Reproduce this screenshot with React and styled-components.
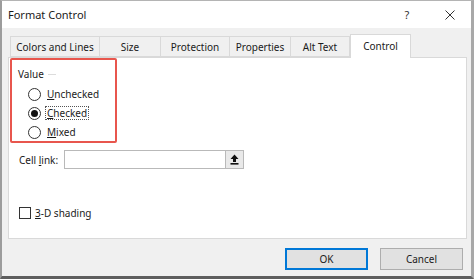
import React from "react";
import styled, { createGlobalStyle } from "styled-components";

const GlobalStyle = createGlobalStyle`
  html, body {
    margin: 0;
    padding: 0;
    background: #f0f0f0;
  }
  body {
    font-family: "Noto Sans", "Open Sans", sans-serif;
    color: #1b1b1b;
  }
`;

const Window = styled.div`
  width: 474px;
  height: 279px;
  box-sizing: border-box;
  background: #f0f0f0;
  border-left: 2px solid #9c9c9c;
  border-top: 1px solid #b4b4b4;
  border-right: 3px solid #a8a8a8;
  border-bottom: 3px solid #5e5e5e;
  display: flex;
  flex-direction: column;
  overflow: hidden;
`;

const TitleBar = styled.div`
  height: 27px;
  flex-shrink: 0;
  background: #ffffff;
  display: flex;
  align-items: center;
  padding: 0 0 0 6px;
  font-size: 11px;
`;

const Title = styled.span`
  flex: 1;
`;

const TitleButton = styled.span`
  width: ${(p) => p.w}px;
  display: flex;
  align-items: center;
  justify-content: center;
  font-size: 11px;
  color: #333;
`;

const Body = styled.div`
  flex: 1;
  display: flex;
  flex-direction: column;
  padding: 6px 4px 0 6px;
`;

const TabStrip = styled.div`
  display: flex;
  align-items: flex-end;
  height: 23px;
  padding-left: 2px;
  position: relative;
  z-index: 1;
`;

const Tab = styled.div`
  width: ${(p) => p.w}px;
  box-sizing: border-box;
  height: ${(p) => (p.active ? 24 : 21)}px;
  margin-bottom: ${(p) => (p.active ? -1 : 0)}px;
  display: flex;
  align-items: center;
  justify-content: center;
  font-size: 10px;
  background: ${(p) => (p.active ? "#ffffff" : "#f0f0f0")};
  border: 1px solid #d9d9d9;
  border-bottom: ${(p) => (p.active ? "none" : "1px solid #d9d9d9")};
  border-left: ${(p) => (p.first || p.active ? "1px solid #d9d9d9" : "none")};
  padding-bottom: ${(p) => (p.active ? 2 : 0)}px;
`;

const Panel = styled.div`
  height: 182px;
  box-sizing: border-box;
  background: #ffffff;
  border: 1px solid #d9d9d9;
  padding: 0 0 0 1px;
  display: flex;
  flex-direction: column;
  font-size: 10px;
`;

const Highlight = styled.div`
  width: 107px;
  height: 85px;
  box-sizing: border-box;
  border: 2.5px solid #e8564d;
  border-radius: 2px;
  padding: 7px 0 0 6px;
`;

const GroupLabel = styled.div`
  display: flex;
  align-items: center;
  gap: 4px;
  height: 14px;
  &::after {
    content: "";
    width: 8px;
    height: 1px;
    background: #dcdcdc;
  }
`;

const RadioList = styled.div`
  display: flex;
  flex-direction: column;
  gap: 5px;
  margin: 6px 0 0 10px;
`;

const RadioRow = styled.label`
  display: flex;
  align-items: center;
  gap: 4px;
  height: 14px;
`;

const RadioCircle = styled.span`
  width: 11px;
  height: 11px;
  border: 1px solid #333;
  border-radius: 50%;
  display: flex;
  align-items: center;
  justify-content: center;
  &::after {
    content: "";
    width: 7px;
    height: 7px;
    border-radius: 50%;
    background: ${(p) => (p.checked ? "#111" : "transparent")};
  }
`;

const RadioText = styled.span`
  padding: 0 1px;
  border: 1px dotted ${(p) => (p.focused ? "#555" : "transparent")};
  line-height: 12px;
`;

const U = styled.span`
  text-decoration: underline;
  text-underline-offset: 1px;
`;

const LinkRow = styled.div`
  display: flex;
  align-items: center;
  margin: 7px 0 0 9px;
  height: 19px;
`;

const LinkLabel = styled.span`
  width: 45px;
`;

const LinkInput = styled.div`
  width: 161px;
  height: 19px;
  box-sizing: border-box;
  border: 1px solid #b9b9b9;
  border-right: none;
  background: #fff;
`;

const CollapseButton = styled.div`
  width: 19px;
  height: 19px;
  box-sizing: border-box;
  border: 1px solid #b9b9b9;
  background: #e9e9e9;
  display: flex;
  align-items: center;
  justify-content: center;
`;

const CheckRow = styled.label`
  display: flex;
  align-items: center;
  gap: 4px;
  margin: 37px 0 0 9px;
`;

const CheckBox = styled.span`
  width: 12px;
  height: 12px;
  box-sizing: border-box;
  border: 1px solid #333;
  background: #fff;
`;

const Footer = styled.div`
  display: flex;
  justify-content: flex-end;
  gap: 12px;
  padding: 9px 4px 0 0;
`;

const Button = styled.div`
  width: 83px;
  height: 22px;
  box-sizing: border-box;
  background: #e1e1e1;
  border: 1px solid ${(p) => (p.primary ? "#0078d7" : "#adadad")};
  box-shadow: ${(p) => (p.primary ? "inset 0 0 0 1px #0078d7" : "none")};
  display: flex;
  align-items: center;
  justify-content: center;
  font-size: 10px;
`;

const tabs = [
  { label: "Colors and Lines", w: 90 },
  { label: "Size", w: 61 },
  { label: "Protection", w: 69 },
  { label: "Properties", w: 61 },
  { label: "Alt Text", w: 59 },
  { label: "Control", w: 61, active: true },
];

export default function App() {
  return (
    <>
      <GlobalStyle />
      <Window>
        <TitleBar>
          <Title>Format Control</Title>
          <TitleButton w={44}>?</TitleButton>
          <TitleButton w={42}>
            <svg width="10" height="10" viewBox="0 0 10 10">
              <path d="M0.5 0.5 L9.5 9.5 M9.5 0.5 L0.5 9.5" stroke="#333" strokeWidth="1" />
            </svg>
          </TitleButton>
        </TitleBar>
        <Body>
          <TabStrip>
            {tabs.map((t, i) => (
              <Tab key={t.label} w={t.w} active={t.active} first={i === 0}>
                {t.label}
              </Tab>
            ))}
          </TabStrip>
          <Panel>
            <Highlight>
              <GroupLabel>Value</GroupLabel>
              <RadioList>
                <RadioRow>
                  <RadioCircle />
                  <RadioText>
                    <U>U</U>nchecked
                  </RadioText>
                </RadioRow>
                <RadioRow>
                  <RadioCircle checked />
                  <RadioText focused>
                    <U>C</U>hecked
                  </RadioText>
                </RadioRow>
                <RadioRow>
                  <RadioCircle />
                  <RadioText>
                    <U>M</U>ixed
                  </RadioText>
                </RadioRow>
              </RadioList>
            </Highlight>
            <LinkRow>
              <LinkLabel>
                Cell <U>l</U>ink:
              </LinkLabel>
              <LinkInput />
              <CollapseButton>
                <svg width="9" height="11" viewBox="0 0 9 11">
                  <path d="M4.5 0.5 L8.5 5 H6 V8 H3 V5 H0.5 Z" fill="#111" />
                  <rect x="0.5" y="9" width="8" height="1.6" fill="#111" />
                </svg>
              </CollapseButton>
            </LinkRow>
            <CheckRow>
              <CheckBox />
              <span>
                <U>3</U>-D shading
              </span>
            </CheckRow>
          </Panel>
          <Footer>
            <Button primary>OK</Button>
            <Button>Cancel</Button>
          </Footer>
        </Body>
      </Window>
    </>
  );
}
